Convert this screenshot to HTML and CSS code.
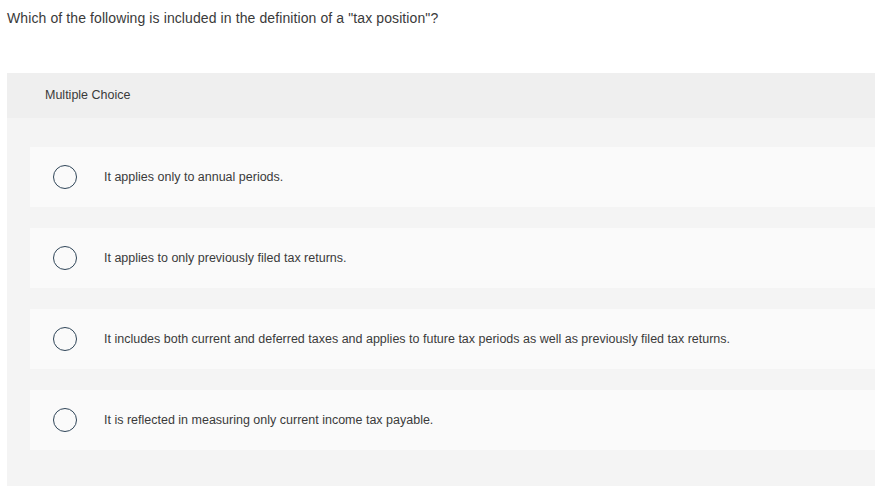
FILE: index.html
```html
<!DOCTYPE html>
<html>
<head>
<meta charset="utf-8">
<link rel="stylesheet" href="styles.css">
</head>
<body>
<p class="question">Which of the following is included in the definition of a "tax position"?</p>
<section class="panel">
  <header class="panel-head">Multiple Choice</header>
  <div class="options">
    <div class="option"><span class="radio"></span><span class="label">It applies only to annual periods.</span></div>
    <div class="option"><span class="radio"></span><span class="label">It applies to only previously filed tax returns.</span></div>
    <div class="option"><span class="radio"></span><span class="label">It includes both current and deferred taxes and applies to future tax periods as well as previously filed tax returns.</span></div>
    <div class="option"><span class="radio"></span><span class="label">It is reflected in measuring only current income tax payable.</span></div>
  </div>
</section>
</body>
</html>
```
FILE: styles.css
```css
html, body {
  margin: 0;
  padding: 0;
  background: #ffffff;
}
body {
  font-family: "Liberation Sans", Arial, sans-serif;
  color: #3a3a3a;
  padding-left: 7px;
  height: 486px;
  overflow: hidden;
}
.question {
  margin: 0;
  padding-top: 10px;
  font-size: 14px;
  letter-spacing: 0.1px;
  line-height: 16px;
  height: 63px;
}
.panel {
  background: #f4f4f4;
  height: 413px;
}
.panel-head {
  background: #efefef;
  height: 45px;
  box-sizing: border-box;
  padding-left: 38px;
  padding-bottom: 2px;
  display: flex;
  align-items: center;
  font-size: 12.5px;
}
.options {
  padding: 29px 0 0 23px;
  display: flex;
  flex-direction: column;
  gap: 21px;
}
.option {
  background: #fafafa;
  height: 60px;
  display: flex;
  align-items: center;
  padding-left: 23px;
}
.radio {
  width: 22px;
  height: 22px;
  border: 1.5px solid #2f4558;
  border-radius: 50%;
  flex: none;
}
.label {
  margin-left: 27px;
  font-size: 12.5px;
  padding-bottom: 1px;
}
```
